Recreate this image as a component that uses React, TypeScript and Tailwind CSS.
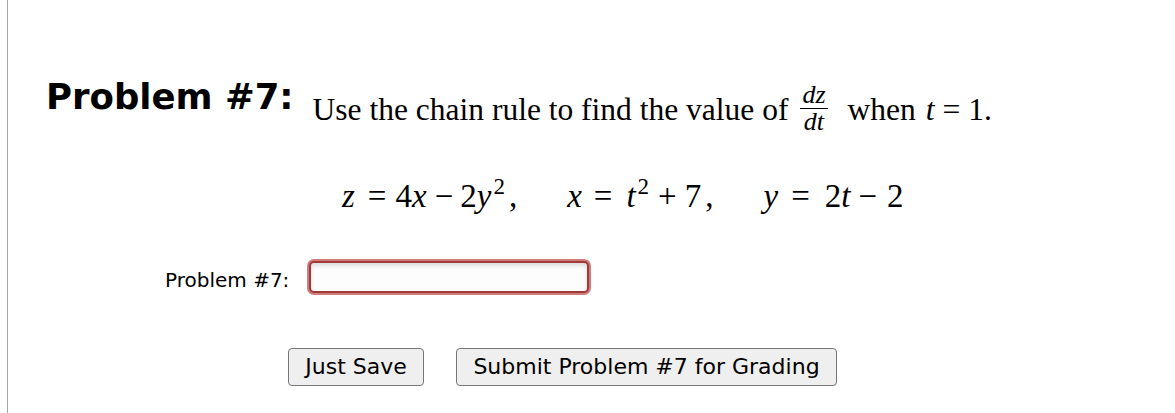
import React from "react";

const serif = "font-['Liberation_Serif','Times_New_Roman',serif]";
const sans = "font-['DejaVu_Sans','Verdana',sans-serif]";

function Sup({ ml }: { ml: string }) {
  return <span className={`${ml} text-[23px] leading-[23px] -translate-y-[13px]`}>2</span>;
}

function Eq() {
  return (
    <div className={`${serif} flex items-baseline text-[33px] leading-[33px] whitespace-nowrap text-black`}>
      <span className="italic">z</span>
      <span className="ml-[13px]">=</span>
      <span className="ml-[9px]">4</span>
      <span className="italic">x</span>
      <span className="ml-[8px]">−</span>
      <span className="ml-[7px]">2</span>
      <span className="italic">y</span>
      <Sup ml="ml-[2px]" />
      <span className="ml-[4px]">,</span>
      <span className="ml-[50px] italic">x</span>
      <span className="ml-[12px]">=</span>
      <span className="ml-[14px] italic">t</span>
      <Sup ml="ml-[2px]" />
      <span className="ml-[9px]">+</span>
      <span className="ml-[8px]">7</span>
      <span className="ml-[4px]">,</span>
      <span className="ml-[50px] italic">y</span>
      <span className="ml-[13px]">=</span>
      <span className="ml-[15px]">2</span>
      <span className="italic">t</span>
      <span className="ml-[8px]">−</span>
      <span className="ml-[10px]">2</span>
    </div>
  );
}

export default function App() {
  return (
    <div className="h-[413px] w-full bg-white overflow-hidden text-black">
      <div className="ml-[7px] h-[413px] border-l border-[#a9a9a9] flex flex-col">
        {/* Row 1 */}
        <div className="mt-[79px] h-[60px] flex items-start pl-[38px]">
          <div className={`${sans} font-bold text-[35.5px] leading-[35.5px] whitespace-nowrap`}>
            Problem #7:
          </div>
          <div className={`${serif} ml-[19px] mt-[14.6px] flex items-start text-[31.5px] leading-[31.5px] whitespace-nowrap`}>
            <span>Use the chain rule to find the value of</span>
            <span className="ml-[12px] mt-[-11.6px] flex flex-col items-center italic text-[26px] leading-[26px]">
              <span className="px-[2px] border-b border-black">dz</span>
              <span className="px-[2px]">dt</span>
            </span>
            <span className="ml-[20px]">when</span>
            <span className="ml-[10px] italic">t</span>
            <span className="ml-[8px]">=</span>
            <span className="ml-[8px]">1.</span>
          </div>
        </div>

        {/* Row 2: equation */}
        <div className="mt-[41px] h-[40px] pl-[334px]">
          <Eq />
        </div>

        {/* Row 3: label + input */}
        <div className="mt-[39px] h-[36px] flex items-start pl-[157px]">
          <div className={`${sans} mt-[11px] text-[20px] leading-[20px] whitespace-nowrap`}>
            Problem #7:
          </div>
          <div className="ml-[18px] w-[284px] h-[36px] rounded-[7px] bg-[#cf7c7c] p-[2px]">
            <div className="h-full w-full rounded-[5px] border-2 border-[#a33838] bg-[#fdfdfd] shadow-[inset_0_3px_4px_rgba(0,0,0,0.13)]" />
          </div>
        </div>

        {/* Row 4: buttons */}
        <div className="mt-[53px] flex items-start pl-[280px]">
          <button
            className={`${sans} w-[136px] h-[38px] rounded-[4px] border border-[#767676] bg-[#efefef] text-[22px] leading-[22px] text-black flex items-center justify-center`}
          >
            Just Save
          </button>
          <button
            className={`${sans} ml-[32px] w-[381px] h-[38px] rounded-[4px] border border-[#767676] bg-[#efefef] text-[22px] leading-[22px] text-black flex items-center justify-center`}
          >
            Submit Problem #7 for Grading
          </button>
        </div>
      </div>
    </div>
  );
}
